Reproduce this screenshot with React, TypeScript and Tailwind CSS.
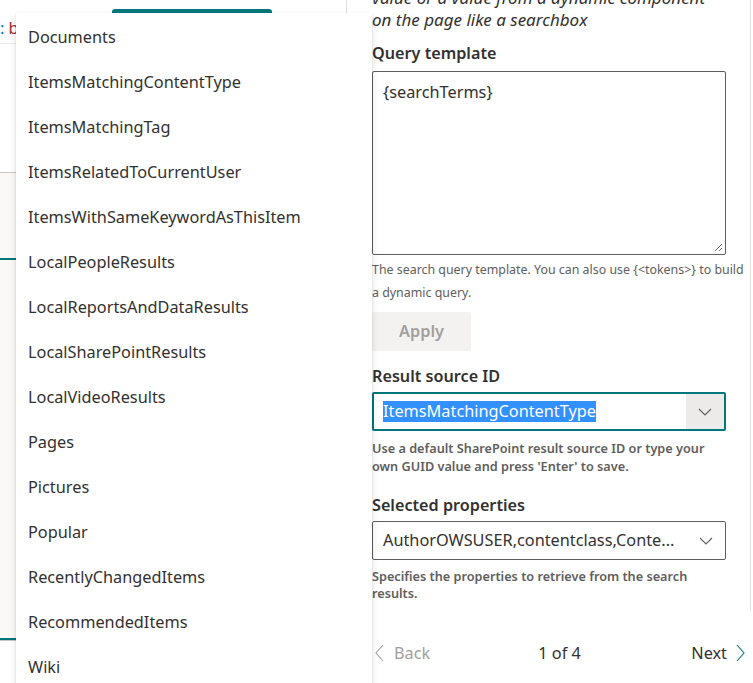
import React from "react";

const items = [
  "Documents",
  "ItemsMatchingContentType",
  "ItemsMatchingTag",
  "ItemsRelatedToCurrentUser",
  "ItemsWithSameKeywordAsThisItem",
  "LocalPeopleResults",
  "LocalReportsAndDataResults",
  "LocalSharePointResults",
  "LocalVideoResults",
  "Pages",
  "Pictures",
  "Popular",
  "RecentlyChangedItems",
  "RecommendedItems",
  "Wiki",
];

function Chevron({ className = "" }: { className?: string }) {
  return (
    <svg width="14" height="8" viewBox="0 0 14 8" className={className} fill="none">
      <path d="M1 1 L7 7 L13 1" stroke="currentColor" strokeWidth="1.1" />
    </svg>
  );
}

export default function App() {
  return (
    <div
      className="relative w-[753px] h-[683px] overflow-hidden bg-white flex text-[#323130]"
      style={{ fontFamily: '"Noto Sans", "Open Sans", sans-serif' }}
    >
      {/* page behind */}
      <div className="w-[346px] h-full flex flex-col shrink-0 overflow-hidden">
        <div className="h-[44px] border-b border-[#edebe9] flex items-start">
          <span className="text-[16.3px] leading-[22px] mt-[17px] whitespace-nowrap">
            <span className="text-[#0078d4]">:</span>
            <span className="text-[#a4262c]"> b</span>
          </span>
          <div className="ml-[93px] mt-[9px] w-[160px] h-[30px] rounded-[3px] bg-[#03787c]" />
        </div>
        <div className="h-[129px] border-b border-[#c8c6c4]" />
        <div className="h-[85px] bg-[#faf9f8]" />
        <div className="h-[2px] bg-[#03787c]" />
        <div className="h-[378px] bg-[#faf9f8]" />
        <div className="h-[2px] bg-[#03787c]" />
        <div className="h-[1px] bg-[#c8c6c4]" />
        <div className="flex-1 bg-white" />
      </div>

      {/* property pane */}
      <div className="w-[407px] shrink-0 h-full border-l border-[#e1dfdd] flex flex-col">
        <div className="h-[610px] w-[404px] border-r border-[#e1dfdd] pl-[25px] flex flex-col overflow-hidden">
          <div className="w-[354px] flex flex-col">
            <div className="mt-[-13px] text-[17px] leading-[22px] italic text-[#323130] whitespace-nowrap">
              <div>value or a value from a dynamic component</div>
              <div>on the page like a searchbox</div>
            </div>

            <div className="mt-[11px] text-[16.2px] leading-[22px] font-semibold">Query template</div>
            <div className="mt-[7px] relative h-[184px] border border-[#605e5c] rounded-[2px] px-[10px] pt-[7px] text-[16.3px] leading-[26px] text-[#323130]">
              {"{searchTerms}"}
              <svg className="absolute right-[2px] bottom-[2px]" width="10" height="10" viewBox="0 0 10 10">
                <path d="M9 2 L2 9 M9 6 L6 9" stroke="#767676" strokeWidth="1" />
              </svg>
            </div>

            <div className="mt-[3px] text-[12.4px] leading-[23px] text-[#605e5c] whitespace-nowrap">
              <div>The search query template. You can also use {"{<tokens>}"} to build</div>
              <div>a dynamic query.</div>
            </div>

            <div className="mt-[8px] w-[99px] h-[39px] rounded-[2px] bg-[#f3f2f1] flex items-center justify-center text-[16.3px] font-semibold text-[#a19f9d]">
              Apply
            </div>

            <div className="mt-[14px] text-[16.2px] leading-[22px] font-semibold">Result source ID</div>
            <div className="mt-[5px] h-[39px] border-2 border-[#03787c] rounded-[2px] flex items-stretch">
              <div className="flex-1 flex items-center pl-[9px]">
                <span className="bg-[#3390ff] text-white text-[16.3px] leading-[21px]">ItemsMatchingContentType</span>
              </div>
              <div className="w-[38px] bg-[#edebe9] flex items-center justify-center text-[#605e5c]">
                <Chevron />
              </div>
            </div>

            <div className="mt-[8px] text-[12.7px] leading-[18px] font-semibold text-[#605e5c] whitespace-nowrap">
              <div>Use a default SharePoint result source ID or type your</div>
              <div>own GUID value and press 'Enter' to save.</div>
            </div>

            <div className="mt-[19px] text-[16.2px] leading-[22px] font-semibold">Selected properties</div>
            <div className="mt-[5px] h-[39px] border border-[#605e5c] rounded-[2px] flex items-center pl-[10px] pr-[12px]">
              <span className="flex-1 min-w-0 text-[16.3px] text-[#323130] whitespace-nowrap">AuthorOWSUSER,contentclass,Conte...</span>
              <Chevron className="ml-[10px] text-[#605e5c] shrink-0" />
            </div>

            <div className="mt-[8px] text-[12.7px] leading-[17px] font-semibold text-[#605e5c] whitespace-nowrap">
              <div>Specifies the properties to retrieve from the search</div>
              <div>results.</div>
            </div>
          </div>
        </div>

        <div className="flex-1 flex items-start pt-[31px] pl-[28px] pr-[8px] text-[16.3px] leading-[24px]">
          <div className="flex items-center gap-[10px] text-[#a19f9d]">
            <svg width="9" height="18" viewBox="0 0 9 18" fill="none">
              <path d="M8 1 L1 9 L8 17" stroke="currentColor" strokeWidth="1.1" />
            </svg>
            <span>Back</span>
          </div>
          <div className="ml-[108px] text-[#323130]">1 of 4</div>
          <div className="ml-auto flex items-center gap-[9px] text-[#323130]">
            <span>Next</span>
            <svg width="9" height="18" viewBox="0 0 9 18" fill="none" className="text-[#03787c]">
              <path d="M1 1 L8 9 L1 17" stroke="currentColor" strokeWidth="1.1" />
            </svg>
          </div>
        </div>
      </div>

      {/* dropdown callout */}
      <div className="absolute left-[16px] top-[13px] w-[356px] h-[700px] bg-white pt-[2px] shadow-[0_3.2px_7.2px_rgba(0,0,0,0.13),0_0.6px_1.8px_rgba(0,0,0,0.11)]">
        {items.map((it) => (
          <div key={it} className="h-[45px] px-[12px] flex items-center text-[16.3px] text-[#323130] whitespace-nowrap">
            {it}
          </div>
        ))}
      </div>
    </div>
  );
}
